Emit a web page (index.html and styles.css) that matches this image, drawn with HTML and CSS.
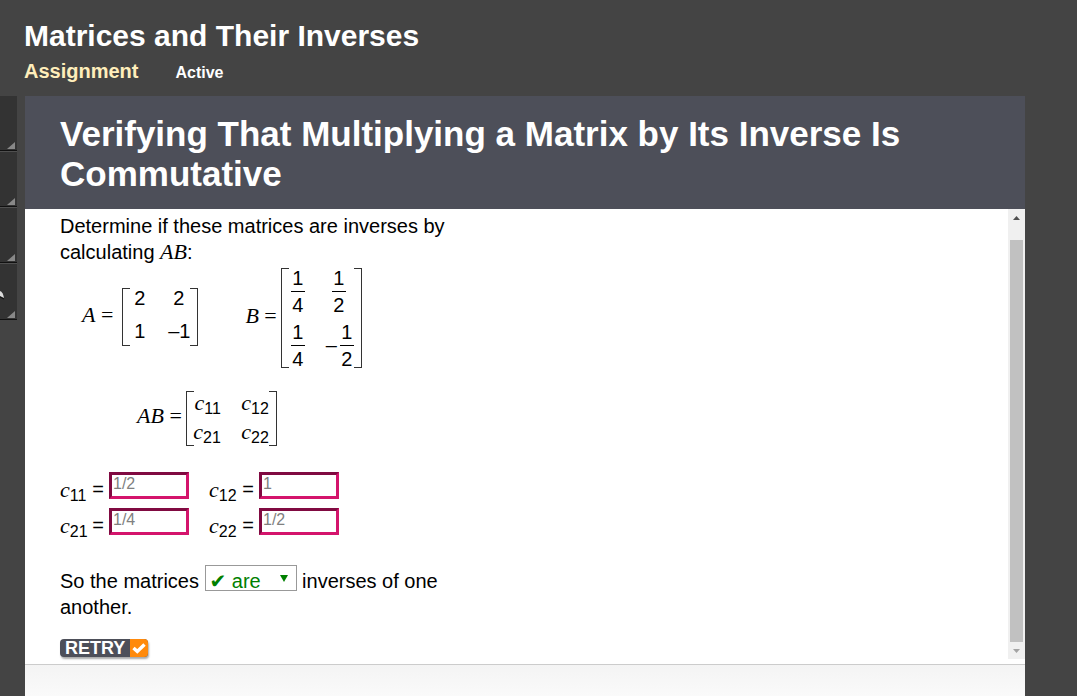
FILE: index.html
```html
<!DOCTYPE html>
<html lang="en">
<head>
<meta charset="utf-8">
<title>Matrices and Their Inverses</title>
<link rel="stylesheet" href="styles.css">
</head>
<body>
<header class="top">
  <h1>Matrices and Their Inverses</h1>
  <div class="meta"><span class="kind">Assignment</span><span class="state">Active</span></div>
</header>
<div class="shell">
  <nav class="tools" aria-label="Tools">
    <button class="tool" aria-label="Tool 1"></button>
    <button class="tool" aria-label="Tool 2"></button>
    <button class="tool" aria-label="Tool 3"></button>
    <button class="tool" aria-label="Tool 4">
      <svg class="tool-icon" width="5" height="12" viewBox="0 0 5 12" aria-hidden="true"><path d="M0 2 Q3 3 4 9 L0 7Z" fill="#ddd"/><path d="M0 8 L4 10" stroke="#111" stroke-width="1"/></svg>
    </button>
  </nav>
  <main class="panel">
    <h2 class="title">Verifying That Multiplying a Matrix by Its Inverse Is Commutative</h2>
    <div class="viewport">
      <div class="content">
        <p class="prompt">Determine if these matrices are inverses by calculating <i>AB</i>:</p>
        <div class="given">
          <div class="equation first">
            <span><i>A</i> =</span>
            <div class="matrix">
              <div class="cells cells-a"><span>2</span><span class="inset">2</span><span>1</span><span>–1</span></div>
            </div>
          </div>
          <div class="equation">
            <span><i>B</i> =</span>
            <div class="matrix">
              <div class="cells cells-b">
                <span class="frac"><span>1</span><span>4</span></span>
                <span class="frac upper"><span>1</span><span>2</span></span>
                <span class="frac"><span>1</span><span>4</span></span>
                <span class="signed"><span class="neg">–</span><span class="frac"><span>1</span><span>2</span></span></span>
              </div>
            </div>
          </div>
        </div>
        <div class="equation product">
          <span><i>AB</i> =</span>
          <div class="matrix">
            <div class="cells cells-c">
              <span><i>c</i><sub>11</sub></span><span><i>c</i><sub>12</sub></span>
              <span><i>c</i><sub>21</sub></span><span><i>c</i><sub>22</sub></span>
            </div>
          </div>
        </div>
        <form class="answers">
          <label for="c11"><span><i>c</i><sub>11</sub></span><span class="eq">=</span></label>
          <input id="c11" type="text" value="1/2">
          <label class="second" for="c12"><span><i>c</i><sub>12</sub></span><span class="eq">=</span></label>
          <input id="c12" type="text" value="1">
          <label for="c21"><span><i>c</i><sub>21</sub></span><span class="eq">=</span></label>
          <input id="c21" type="text" value="1/4">
          <label class="second" for="c22"><span><i>c</i><sub>22</sub></span><span class="eq">=</span></label>
          <input id="c22" type="text" value="1/2">
        </form>
        <p class="conclusion">So the matrices <span class="choice"><select aria-label="are or are not"><option>✔ are</option><option>are not</option></select></span> inverses of one another.</p>
        <button class="retry"><span class="retry-text">RETRY</span><span class="retry-check"><svg width="14" height="12" viewBox="0 0 14 12" aria-hidden="true"><path d="M1.5 6 L5.3 9.5 L12.5 2.5" fill="none" stroke="#fff" stroke-width="3.4"/></svg></span></button>
      </div>
      <div class="scrollbar" aria-hidden="true">
        <svg width="7" height="4" viewBox="0 0 7 4"><path d="M0 4 L3.5 0 L7 4Z" fill="#505050"/></svg>
        <div class="thumb"></div>
        <svg width="7" height="4" viewBox="0 0 7 4"><path d="M0 0 L3.5 4 L7 0Z" fill="#a3a3a3"/></svg>
      </div>
    </div>
    <div class="foot"></div>
  </main>
</div>
</body>
</html>
```
FILE: styles.css
```css
* { box-sizing: border-box; }
body {
  margin: 0;
  min-height: 100vh;
  display: flex;
  flex-direction: column;
  background: #444;
  color: #000;
  font-family: "Liberation Sans", Arial, sans-serif;
  font-size: 20px;
}
h1, h2, p { margin: 0; }
i { font-family: "Liberation Serif", "Times New Roman", serif; font-size: 22px; line-height: 1; }
sub { font-size: 16px; line-height: 1; vertical-align: -4px; }

.top { padding: 18px 24px 9px; color: #fff; font-weight: bold; }
.top h1 { font-size: 30px; line-height: 35px; }
.meta { display: flex; align-items: baseline; gap: 37px; margin-top: 4px; line-height: 28px; }
.kind { color: #ffeebb; }
.state { font-size: 16px; }

.shell { flex: 1; display: flex; gap: 8px; padding-right: 52px; }
.tools { width: 17px; flex: none; }
.tool {
  position: relative;
  display: block;
  width: 100%;
  height: 56px;
  padding: 0;
  background: #333;
  border: 0;
  border-top: 1px solid #505050;
  border-bottom: 1px solid #111;
}
.tool:first-child { height: 55px; border-top: 0; }
.tool:last-child { height: 57px; }
.tool::after {
  content: "";
  position: absolute;
  right: 2px;
  bottom: 1px;
  border-left: 8px solid transparent;
  border-bottom: 7px solid #888;
}
.tool-icon { position: absolute; left: 0; top: 25px; }

.panel { flex: 1; display: flex; flex-direction: column; min-width: 0; background: #fff; }
.title {
  padding: 18px 35px 15px;
  background: #4d4f59;
  color: #fff;
  font-size: 35px;
  line-height: 40px;
}
.viewport { display: flex; justify-content: space-between; padding-bottom: 5px; }
.content { padding: 4px 0 0 35px; }
.prompt, .conclusion { max-width: 400px; line-height: 26px; }

.given { display: flex; align-items: center; gap: 47px; padding: 3px 0 0 22px; }
.equation { display: flex; align-items: center; gap: 4px; }
.first { gap: 9px; padding-bottom: 3px; }
.product { padding: 23px 0 0 77px; }
.equation > span { padding-bottom: 4px; font-family: "Liberation Serif", "Times New Roman", serif; font-size: 22px; }
.product > span { padding-bottom: 6px; }
.matrix { display: flex; }
.matrix::before, .matrix::after { content: ""; width: 7px; border: 1px solid #333; }
.matrix::before { border-right: 0; }
.matrix::after { border-left: 0; }
.cells { display: grid; align-items: center; line-height: 20px; }
.cells-a { grid-template: 33px 24px / 15px 45px; height: 58px; align-items: start; justify-items: end; }
.inset { padding-right: 6px; }
.cells-b { grid-template: 46px 46px / 16px 49px; row-gap: 8px; justify-items: end; }
.cells-c { grid-template: 26px 26px / 27px 48px; row-gap: 3px; justify-items: end; }
.frac { display: inline-grid; width: 14px; justify-items: center; line-height: 26px; }
.frac span + span { border-top: 1px solid #000; width: 100%; text-align: center; }
.upper { margin-right: 8px; }
.signed { display: flex; align-items: center; }
.neg { width: 14px; }

.answers {
  display: grid;
  grid-template-columns: 49px 80px 70px 80px;
  row-gap: 9px;
  padding: 26px 0 33px;
}
.answers label { display: flex; align-items: center; justify-content: space-between; height: 27px; padding-right: 5px; }
.answers .second { padding-left: 20px; }
.answers label > span:first-child { padding-top: 12px; }
.answers .eq { padding-top: 8px; }
.answers input {
  width: 80px;
  height: 27px;
  padding: 0 1px 3px;
  border: 3px solid #d4146c;
  border-color: #800a41 #d4146c #d4146c #800a41;
  background: #fff;
  color: #808080;
  font: 16px "Liberation Sans", Arial, sans-serif;
}

.choice { position: relative; display: inline-block; height: 26px; margin: -3px 0 0; vertical-align: top; }
.choice select {
  appearance: none;
  display: block;
  width: 92px;
  height: 26px;
  padding: 4px 4px 0;
  border: 1px solid #999;
  border-radius: 0;
  background: #fff;
  color: #008000;
  font: 20px "Liberation Sans", "DejaVu Sans", sans-serif;
}
.choice::after {
  content: "";
  position: absolute;
  right: 9px;
  top: 10px;
  border: 4px solid transparent;
  border-top: 7px solid #008000;
  border-bottom: 0;
}

.retry {
  display: flex;
  margin: 19px 0 2px;
  padding: 0;
  height: 18px;
  border: 0;
  border-radius: 4px;
  overflow: hidden;
  background: #4d4f59;
  color: #fff;
  box-shadow: 1px 2px 2px #aaa;
  font: bold 18px/19px "Liberation Sans", Arial, sans-serif;
}
.retry-text { padding: 0 5px; }
.retry-check { display: flex; align-items: center; justify-content: center; width: 18px; height: 18px; background: #ff8a0c; }

.scrollbar {
  display: flex;
  flex-direction: column;
  align-items: center;
  gap: 7px;
  width: 17px;
  padding: 7px 2px 6px;
  background: #f0f0f0;
}
.scrollbar svg { flex: none; }
.scrollbar .thumb { flex: 1; width: 100%; margin-top: 13px; background: #c1c1c1; }
.foot { flex: 1; min-height: 32px; border-top: 1px solid #ccc; background: linear-gradient(#f4f4f4, #fafafa); }
```
